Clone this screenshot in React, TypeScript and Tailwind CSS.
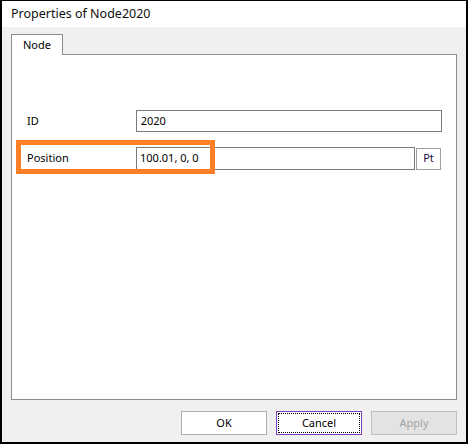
export default function App() {
  return (
    <div className="w-[468px] h-[445px] bg-white" style={{ fontFamily: '"Noto Sans", "Open Sans", sans-serif' }}>
      <div className="w-[468px] h-[444px] border-x-2 border-t border-b-2 border-black flex flex-col">
        <div className="h-[26px] bg-white flex items-center pl-[9px] text-[12.5px] text-[#111]">
          Properties of Node2020
        </div>
        <div className="flex-1 bg-[#f0f0f0] flex flex-col px-[9px] pt-[7px]">
          <div className="flex">
            <div className="relative z-10 -mb-px w-[52px] h-[21px] bg-white border border-b-0 border-[#8c8c8c] flex items-center justify-center text-[11px] text-black">
              Node
            </div>
          </div>
          <div className="relative h-[346px] bg-white border border-[#8c8c8c] pl-[14px] pr-[14px] pt-[55px] text-[11px] text-black">
            <div className="flex items-center h-[22px]">
              <div className="w-[110px] pl-px">ID</div>
              <div className="w-[307px] h-[22px] border border-[#7a7a7a] flex items-center pl-[4px]">2020</div>
            </div>
            <div className="flex items-center h-[23px] mt-[15px]">
              <div className="w-[110px] pl-px">Position</div>
              <div className="w-[279px] h-[23px] border border-[#7a7a7a] flex items-center pl-[3px]">100.01, 0, 0</div>
              <div className="ml-[1px] w-[25px] h-[22px] border border-[#a0a0a0] bg-white flex items-center justify-center text-[#1a1040]">
                Pt
              </div>
            </div>
            <div className="absolute left-[4px] top-[85px] w-[199px] h-[34px] border-[5px] border-[#ff7f27]" />
          </div>
          <div className="flex justify-end gap-[9px] mt-[11px] text-[11px]">
            <div className="w-[86px] h-[24px] border border-[#adadad] bg-white flex items-center justify-center text-black">OK</div>
            <div className="w-[86px] h-[24px] border border-[#7b3fb8] bg-white p-px">
              <div className="w-full h-full border border-dotted border-black flex items-center justify-center text-black">Cancel</div>
            </div>
            <div className="w-[86px] h-[24px] border border-[#bfbfbf] bg-[#e3e3e3] flex items-center justify-center text-[#a3a3a3]">Apply</div>
          </div>
        </div>
      </div>
    </div>
  );
}
